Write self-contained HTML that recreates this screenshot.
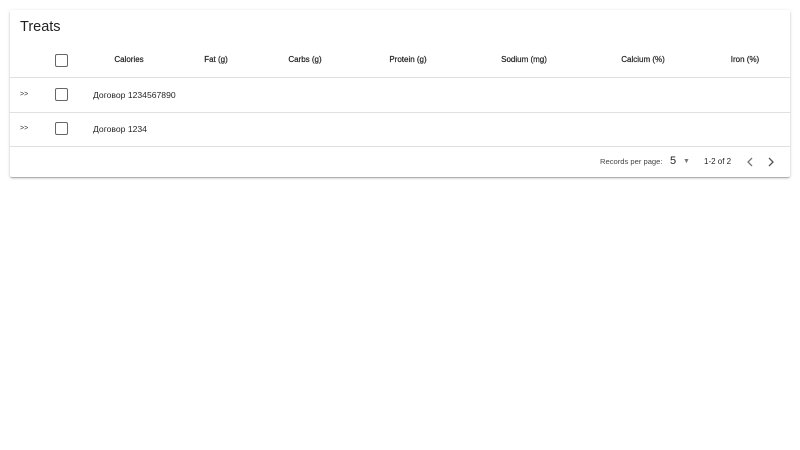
<!DOCTYPE html>
<html><head><meta charset="utf-8"><style>
*{margin:0;padding:0;box-sizing:border-box}
body{width:800px;height:450px;background:#fff;font-family:"Liberation Sans",sans-serif;position:relative;color:rgba(0,0,0,.87)}
.card{position:absolute;left:10px;top:10px;width:780px;height:167px;background:#fff;border-radius:2px;box-shadow:0 1px 3px rgba(0,0,0,.2),0 1px 1px rgba(0,0,0,.14),0 2px 1px -1px rgba(0,0,0,.12)}
.a{position:absolute;white-space:nowrap}
.title{left:10px;top:9px;font-size:14.5px}
.h{top:45px;font-size:8px;color:#222;transform:translateX(-50%);-webkit-text-stroke:0.2px #222}
.cb{position:absolute;left:45px;width:13px;height:13px;border:1.5px solid #666;border-radius:2px}
.line{position:absolute;left:0;width:780px;height:1px;background:#e0e0e0}
.r{font-size:8.6px}
.s{font-size:7px;color:#333}
.f{font-size:8px}
</style></head><body>
<div class="card">
<div class="a title">Treats</div>
<div class="cb" style="top:44px"></div>
<div class="a h" style="left:119px">Calories</div>
<div class="a h" style="left:206px">Fat (g)</div>
<div class="a h" style="left:295px">Carbs (g)</div>
<div class="a h" style="left:398px">Protein (g)</div>
<div class="a h" style="left:514px">Sodium (mg)</div>
<div class="a h" style="left:633px">Calcium (%)</div>
<div class="a h" style="left:735px">Iron (%)</div>
<div class="line" style="top:67px"></div>
<div class="a s" style="left:10px;top:81px">&gt;&gt;</div>
<div class="cb" style="top:78px"></div>
<div class="a r" style="left:83px;top:80px">Договор 1234567890</div>
<div class="line" style="top:102px"></div>
<div class="a s" style="left:10px;top:115px">&gt;&gt;</div>
<div class="cb" style="top:112px"></div>
<div class="a r" style="left:83px;top:114px">Договор 1234</div>
<div class="line" style="top:136px"></div>
<div class="a" style="left:590px;top:147px;font-size:7.6px;color:rgba(0,0,0,.75)">Records per page:</div>
<div class="a" style="left:660px;top:145px;font-size:11px">5</div>
<div class="a" style="left:673px;top:148px;font-size:7px;color:#777">▼</div>
<div class="a f" style="left:694px;top:147px">1-2 of 2</div>
<svg class="a" style="left:734px;top:146px" width="12" height="12" viewBox="0 0 12 12"><path d="M8 2L4 6l4 4" fill="none" stroke="#777" stroke-width="1.3"/></svg>
<svg class="a" style="left:755px;top:146px" width="12" height="12" viewBox="0 0 12 12"><path d="M4 2l4 4-4 4" fill="none" stroke="#555" stroke-width="1.3"/></svg>
</div>
</body></html>
